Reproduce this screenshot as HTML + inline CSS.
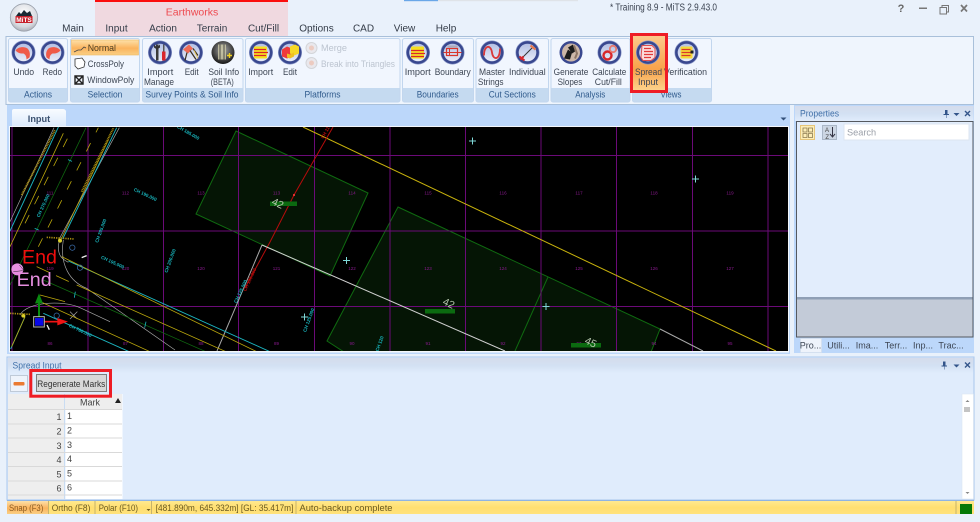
<!DOCTYPE html>
<html><head><meta charset="utf-8"><title>MiTS</title>
<style>
html,body{margin:0;padding:0;width:980px;height:522px;overflow:hidden;background:#e9f1fb}
svg{display:block;filter:blur(.3px)}
text{font-family:"Liberation Sans",sans-serif;font-size:9.4px;fill:#3d4654}
.c{text-anchor:middle}
.lab{fill:#2f5a8c;text-anchor:middle}
.tab{font-size:10px;fill:#333b47;text-anchor:middle}
.dis{fill:#bcc4d0}
.grid{font-size:4.5px;fill:#8a1a8f;text-anchor:middle}
.ch{font-size:15px;fill:#18b4bc;font-weight:bold}
.st{fill:#6a5a20;font-size:9.6px}
.gt{fill:#3f6fa8;font-size:9.4px}
.num{text-anchor:end;fill:#444;font-size:9px}
.val{fill:#444;font-size:9px}
</style></head><body>
<svg width="980" height="522" viewBox="0 0 980 522" xmlns="http://www.w3.org/2000/svg">
<defs>
<linearGradient id="gb" x1="0" y1="0" x2="0" y2="1"><stop offset="0" stop-color="#b4c0e4"/><stop offset="1" stop-color="#e8ecf8"/></linearGradient>
<linearGradient id="or" x1="0" y1="0" x2="0" y2="1"><stop offset="0" stop-color="#fde0a8"/><stop offset=".55" stop-color="#fbb45e"/><stop offset="1" stop-color="#f9cf85"/></linearGradient>
<linearGradient id="sp" x1="0" y1="0" x2="0" y2="1"><stop offset="0" stop-color="#fcc98a"/><stop offset=".6" stop-color="#f8a24a"/><stop offset="1" stop-color="#fdd48e"/></linearGradient>
<linearGradient id="yl" x1="0" y1="0" x2="0" y2="1"><stop offset="0" stop-color="#ffe98f"/><stop offset=".5" stop-color="#ffdf70"/><stop offset="1" stop-color="#ffe27c"/></linearGradient>
<linearGradient id="tb" x1="0" y1="0" x2="0" y2="1"><stop offset="0" stop-color="#d5dcec"/><stop offset=".5" stop-color="#d3e1f3"/><stop offset="1" stop-color="#e0ecfc"/></linearGradient>
<linearGradient id="dt" x1="0" y1="0" x2="0" y2="1"><stop offset="0" stop-color="#f8fbff"/><stop offset="1" stop-color="#dbe9fb"/></linearGradient>
<radialGradient id="lg" cx=".5" cy=".35" r=".7"><stop offset="0" stop-color="#fff"/><stop offset=".7" stop-color="#d5d8de"/><stop offset="1" stop-color="#a0a4ae"/></radialGradient>
<radialGradient id="dk" cx=".5" cy=".4" r=".6"><stop offset="0" stop-color="#aaa"/><stop offset="1" stop-color="#161616"/></radialGradient>
<g id="ring"><circle r="11.7" fill="#39488f"/><circle r="11.7" fill="none" stroke="#8a97c8" stroke-width=".6"/><circle r="8.8" fill="url(#gb)"/></g>
<clipPath id="cv"><rect x="10" y="127" width="778" height="224"/></clipPath>
</defs>

<rect width="980" height="522" fill="#e9f1fb"/>
<rect x="404" y="0" width="34" height="1.200" fill="#6aa7e8"/><rect x="438" y="0" width="140" height="1.200" fill="#dfe3e8"/>

<!-- logo -->
<circle cx="24" cy="17.500" r="13.700" fill="url(#lg)" stroke="#9aa0aa" stroke-width=".8"/>
<path d="M16 16l3-4 2 2 3-4 3 3 3-2 2 5z" fill="#1a2a33"/>
<rect x="15.500" y="16" width="17" height="7" fill="#c8202a"/>
<text x="24" y="22" class="c" style="font-size:6.500px;font-weight:bold;fill:#fff">MiTS</text>

<!-- context band and tabs -->
<rect x="95" y="0" width="193" height="36" fill="#f0d9e0"/>
<rect x="95" y="0" width="193" height="2" fill="#fb0d0d"/>
<text x="192" y="15.500" class="c" style="font-size:10.500px;fill:#ee4a50">Earthworks</text>
<text x="73" y="31.500" class="tab">Main</text>
<text x="116.500" y="31.500" class="tab">Input</text>
<text x="163" y="31.500" class="tab">Action</text>
<text x="212" y="31.500" class="tab">Terrain</text>
<text x="263.500" y="31.500" class="tab">Cut/Fill</text>
<text x="316.500" y="31.500" class="tab">Options</text>
<text x="363.500" y="31.500" class="tab">CAD</text>
<text x="404.500" y="31.500" class="tab">View</text>
<text x="446" y="31.500" class="tab">Help</text>
<text x="610" y="10.500" style="font-size:9.800px;fill:#3a4250" textLength="107" lengthAdjust="spacingAndGlyphs">* Training 8.9 - MiTS 2.9.43.0</text>

<!-- window buttons -->
<text x="901" y="12" class="c" style="font-size:11px;font-weight:bold;fill:#666">?</text>
<rect x="919" y="7.500" width="8" height="1.500" fill="#777"/>
<path d="M940 7.500h6.500v6.500h-6.500zM942 7.500v-2h6.500v6.500h-2" fill="none" stroke="#777" stroke-width="1"/>
<path d="M961 5l6 6.500M967 5l-6 6.500" stroke="#777" stroke-width="1.700"/>

<!-- ribbon -->
<rect x="6" y="36.500" width="967.500" height="68" fill="#eff5fd" stroke="#a9c0da" stroke-width="1"/>
<g fill="#f1f6fe" stroke="#c2d6ee" stroke-width="1">
<rect x="8.500" y="38.500" width="59" height="63.500" rx="2"/>
<rect x="70.500" y="38.500" width="69" height="63.500" rx="2"/>
<rect x="142.500" y="38.500" width="100.500" height="63.500" rx="2"/>
<rect x="245.500" y="38.500" width="154.500" height="63.500" rx="2"/>
<rect x="402.500" y="38.500" width="71" height="63.500" rx="2"/>
<rect x="476" y="38.500" width="72.500" height="63.500" rx="2"/>
<rect x="551" y="38.500" width="79" height="63.500" rx="2"/>
<rect x="632.500" y="38.500" width="79" height="63.500" rx="2"/>
</g>
<g fill="#c5daf0">
<rect x="9" y="88" width="58" height="13.500"/><rect x="71" y="88" width="68" height="13.500"/>
<rect x="143" y="88" width="99.500" height="13.500"/><rect x="246" y="88" width="153.500" height="13.500"/>
<rect x="403" y="88" width="70" height="13.500"/><rect x="476.500" y="88" width="71.500" height="13.500"/>
<rect x="551.500" y="88" width="78" height="13.500"/><rect x="633" y="88" width="78" height="13.500"/>
</g>
<text x="38" y="97.500" class="lab" textLength="28" lengthAdjust="spacingAndGlyphs">Actions</text>
<text x="105" y="97.500" class="lab" textLength="34.700" lengthAdjust="spacingAndGlyphs">Selection</text>
<text x="192" y="97.500" class="lab" textLength="93" lengthAdjust="spacingAndGlyphs">Survey Points &amp; Soil Info</text>
<text x="322.500" y="97.500" class="lab" textLength="36" lengthAdjust="spacingAndGlyphs">Platforms</text>
<text x="437.700" y="97.500" class="lab" textLength="42" lengthAdjust="spacingAndGlyphs">Boundaries</text>
<text x="512.300" y="97.500" class="lab" textLength="47" lengthAdjust="spacingAndGlyphs">Cut Sections</text>
<text x="590.300" y="97.500" class="lab" textLength="30" lengthAdjust="spacingAndGlyphs">Analysis</text>
<text x="671" y="97.500" class="lab" textLength="21" lengthAdjust="spacingAndGlyphs">Views</text>

<!-- selection -->
<rect x="71.500" y="40" width="67" height="15" fill="url(#or)" stroke="#eeb760" stroke-width=".6"/>
<path d="M74 52l4-2 3 0 3-3 2 1" fill="none" stroke="#444" stroke-width=".8"/>
<text x="87.700" y="51" style="fill:#4a3c20" textLength="28.300" lengthAdjust="spacingAndGlyphs">Normal</text>
<path d="M75 59l7-1 3 4-1 5-6 2-3-3z" fill="#fff" stroke="#333" stroke-width=".8"/>
<text x="87.700" y="67" textLength="36.300" lengthAdjust="spacingAndGlyphs">CrossPoly</text>
<path d="M75 76h8v8h-8zM75 76l8 8M83 76l-8 8" fill="none" stroke="#222" stroke-width="1.400"/>
<text x="87.300" y="83" textLength="47" lengthAdjust="spacingAndGlyphs">WindowPoly</text>

<!-- icons -->
<g transform="translate(23.500,52.500)"><use href="#ring"/><path d="M-8 -2c3-4 9-4 12-2 2 2 3 5 2 9l-3 2c0-3-1-5-3-6-3 0-5 0-8-3z" fill="#ef5a48"/></g>
<g transform="translate(52.500,52.500)"><use href="#ring"/><path d="M8 -2c-3-4-9-4-12-2-2 2-3 5-2 9l3 2c0-3 1-5 3-6 3 0 5 0 8-3z" fill="#ef5a48"/></g>
<g transform="translate(160,52.500)"><use href="#ring"/><path d="M-4 -8h2.500v16h-2.500z" fill="#3a3a3a"/><path d="M-6 -8l3 3 3-3v3l-3 2-3-2z" fill="#333"/><path d="M2 -1h3.500v9h-3.500z" fill="#d9262c"/><path d="M3 -8h1.500v7h-1.500z" fill="#555"/></g>
<g transform="translate(191,52.500)"><use href="#ring"/><path d="M-8 -3l6-5 4 4-5 5z" fill="#ef6a55"/><path d="M-4 0l-2 8M-1 -2l6 9M2 -4l5 7" stroke="#3a3020" stroke-width="1.200" fill="none"/><path d="M3 -2l4 8" stroke="#e6c860" stroke-width="1"/></g>
<g transform="translate(223,52.500)"><circle r="11.500" fill="url(#dk)"/><rect x="-5" y="-8" width="8" height="15" fill="#c9c6a5" opacity=".85"/><path d="M-3 -8v15M1 -8v15" stroke="#333" stroke-width=".8"/><path d="M4 3h5M6.500 .5v5" stroke="#f0d020" stroke-width="1.400"/></g>
<g transform="translate(261,52.500)"><use href="#ring"/><rect x="-7" y="-6" width="13" height="12" rx="1" fill="#f5e020"/><path d="M-7 -3h12M-7 0h14M-7 3h12" stroke="#d9262c" stroke-width="1.300"/></g>
<g transform="translate(290,52.500)"><use href="#ring"/><path d="M-8 -3l5-3 5 2v8l-5 2-5-2z" fill="#ef3a3a"/><path d="M0 -6l5-2 4 2v7l-5 2-4-2z" fill="#f6d826"/><path d="M-3 1l3 1 4-2v4l-4 2-3-1z" fill="#f0c020"/></g>
<g opacity=".55"><circle cx="311.500" cy="48" r="5.500" fill="#e4dde0" stroke="#bbb"/><circle cx="311.500" cy="48" r="2.500" fill="#e9a890"/><circle cx="311.500" cy="63" r="5.500" fill="#e4dde0" stroke="#bbb"/><circle cx="311.500" cy="63" r="2.500" fill="#e9a890"/></g>
<text x="321" y="51" class="dis" textLength="26" lengthAdjust="spacingAndGlyphs">Merge</text>
<text x="321" y="67" class="dis" textLength="74" lengthAdjust="spacingAndGlyphs">Break into Triangles</text>
<g transform="translate(418,52.500)"><use href="#ring"/><rect x="-7" y="-6" width="13" height="12" rx="1" fill="#f5e020"/><path d="M-7 -2h13M-7 1h14M-7 4h13" stroke="#d9262c" stroke-width="1.200"/></g>
<g transform="translate(452.500,52.500)"><use href="#ring"/><rect x="-6" y="-4" width="11" height="7" fill="none" stroke="#d9362c" stroke-width="1.200"/><path d="M-9 0h18M-3 -4v7" stroke="#d9362c" stroke-width="1"/><rect x="-5" y="-7" width="10" height="2" fill="#aab"/></g>
<g transform="translate(492,52.500)"><use href="#ring"/><path d="M-8 3c0-11 7-11 8-3s8 8 8-4" fill="none" stroke="#d8383a" stroke-width="1.800"/></g>
<g transform="translate(527.500,52.500)"><use href="#ring"/><path d="M-6 6L6 -6" stroke="#333" stroke-width="1"/><path d="M-8 4l5 4M-7 7l3-3" stroke="#d9262c" stroke-width="2"/><path d="M3 -7l5 4" stroke="#e87a50" stroke-width="2.200"/></g>
<g transform="translate(571,52.500)"><circle r="11.500" fill="#39488f"/><circle r="9" fill="#ccb7a8"/><path d="M-7 6l4-9 4 3-2 7zM-3 -5l5-3 2 7-3 2z" fill="#1c1c1c"/><path d="M3 -7l3 8-2 5" stroke="#8c7565" stroke-width="2" fill="none"/></g>
<g transform="translate(609.500,52.500)"><use href="#ring"/><circle cx="-2" cy="3" r="4" fill="none" stroke="#d8262a" stroke-width="2.400"/><circle cx="3.500" cy="-3.500" r="3.200" fill="none" stroke="#e87a70" stroke-width="1.800"/></g>

<rect x="632" y="36" width="34" height="55" fill="url(#sp)"/>
<g transform="translate(648,52.500)"><use href="#ring"/><path d="M-6 -7h10l3 3v9l-4 3H-5l-2-3z" fill="#fbdcdc" stroke="#e05050" stroke-width="1"/><path d="M-4 -4h7M-4 -1h9M-4 2h9M-4 5h7" stroke="#e03a3a" stroke-width="1.200"/></g>
<g transform="translate(686.500,52.500)"><use href="#ring"/><rect x="-6" y="-6" width="12" height="12" rx="1" fill="#f5d838"/><path d="M-5 -3h9M-5 0h9M-5 3h9" stroke="#d9362c" stroke-width="1.200"/><rect x="4" y="-2" width="3" height="3" fill="#222"/></g>

<!-- ribbon labels -->
<text x="23.700" y="75" class="c" textLength="20.700" lengthAdjust="spacingAndGlyphs">Undo</text>
<text x="52.300" y="75" class="c" textLength="19.300" lengthAdjust="spacingAndGlyphs">Redo</text>
<text x="160.300" y="75" class="c" textLength="26" lengthAdjust="spacingAndGlyphs">Import</text><text x="159" y="85" class="c" textLength="30" lengthAdjust="spacingAndGlyphs">Manage</text>
<text x="191.700" y="75" class="c" textLength="14" lengthAdjust="spacingAndGlyphs">Edit</text>
<text x="223.700" y="75" class="c" textLength="30.700" lengthAdjust="spacingAndGlyphs">Soil Info</text><text x="222.300" y="85" class="c" textLength="23" lengthAdjust="spacingAndGlyphs">(BETA)</text>
<text x="260.700" y="75" class="c" textLength="25" lengthAdjust="spacingAndGlyphs">Import</text>
<text x="290" y="75" class="c" textLength="14" lengthAdjust="spacingAndGlyphs">Edit</text>
<text x="417.700" y="75" class="c" textLength="26" lengthAdjust="spacingAndGlyphs">Import</text>
<text x="452.700" y="75" class="c" textLength="36" lengthAdjust="spacingAndGlyphs">Boundary</text>
<text x="492" y="75" class="c" textLength="26" lengthAdjust="spacingAndGlyphs">Master</text><text x="490.700" y="85" class="c" textLength="25.700" lengthAdjust="spacingAndGlyphs">Strings</text>
<text x="527.300" y="75" class="c" textLength="36.700" lengthAdjust="spacingAndGlyphs">Individual</text>
<text x="571" y="75" class="c" textLength="34.700" lengthAdjust="spacingAndGlyphs">Generate</text><text x="570" y="85" class="c" textLength="24.700" lengthAdjust="spacingAndGlyphs">Slopes</text>
<text x="609.300" y="75" class="c" textLength="34" lengthAdjust="spacingAndGlyphs">Calculate</text><text x="608.300" y="85" class="c" textLength="27" lengthAdjust="spacingAndGlyphs">Cut/Fill</text>
<text x="648.500" y="75" class="c" textLength="27" lengthAdjust="spacingAndGlyphs">Spread</text><text x="648" y="85" class="c" textLength="20" lengthAdjust="spacingAndGlyphs">Input</text>
<text x="685.500" y="75" class="c" textLength="43" lengthAdjust="spacingAndGlyphs">Verification</text>
<rect x="631.500" y="34.500" width="35" height="57" fill="none" stroke="#ee1c25" stroke-width="3"/>

<!-- document area -->
<rect x="7" y="105" width="783" height="249" fill="#bcd7fa"/>
<path d="M12 127v-16q0-2 2-2h49q2 0 3 2v16z" fill="url(#dt)"/>
<text x="39" y="122" class="c" style="font-weight:bold;font-size:9.200px;fill:#3b5270">Input</text>
<path d="M780.500 117.500h6l-3 3z" fill="#33507a"/>
<rect x="9" y="126" width="780" height="226.500" fill="#f4f7fb"/>
<rect x="10" y="127" width="778" height="224" fill="#000"/>

<!-- CAD canvas -->
<g clip-path="url(#cv)">
<g fill="#051505" stroke="#0f6a10" stroke-width="1">
<path d="M236 131L368 193 330 276 196 214z"/>
<path d="M398 207L660 329 651 352H344L327 341z"/>
</g>
<path d="M548 277L515 351" stroke="#0f6a10" fill="none"/>
<g stroke="#6b0a78" stroke-width="1">
<path d="M12 127v224M88 127v224M163.500 127v224M238.500 127v224M314.500 127v224M390 127v224M465.500 127v224M541 127v224M616.500 127v224M692.500 127v224M768 127v224"/>
<path d="M10 155.500h778M10 231h778M10 306.500h778"/>
</g>
<path d="M303 127L776 351" stroke="#c9b30c" stroke-width="1" fill="none"/>
<path d="M333 127L294 195 270 242 245 288" stroke="#b50c0c" stroke-width="1" fill="none"/>
<circle cx="294" cy="195" r="1.100" fill="#e33"/>
<path d="M660 329L703 351M262 245L217 351" stroke="#a8a8a8" stroke-width="1" fill="none"/>
<path d="M262 245L505 351" stroke="#cfcfcf" stroke-width="1" fill="none"/>

<g>
<text x="50" y="194.500" class="grid">111</text><text x="125.500" y="194.500" class="grid">112</text><text x="201" y="194.500" class="grid">113</text><text x="276.500" y="194.500" class="grid">113</text><text x="352" y="194.500" class="grid">114</text><text x="428" y="194.500" class="grid">115</text><text x="503" y="194.500" class="grid">116</text><text x="579" y="194.500" class="grid">117</text><text x="654" y="194.500" class="grid">118</text><text x="730" y="194.500" class="grid">119</text>
<text x="50" y="270" class="grid">119</text><text x="125.500" y="270" class="grid">120</text><text x="201" y="270" class="grid">120</text><text x="276.500" y="270" class="grid">121</text><text x="352" y="270" class="grid">122</text><text x="428" y="270" class="grid">123</text><text x="503" y="270" class="grid">124</text><text x="579" y="270" class="grid">125</text><text x="654" y="270" class="grid">126</text><text x="730" y="270" class="grid">127</text>
<text x="50" y="345" class="grid">86</text><text x="125.500" y="345" class="grid">87</text><text x="201" y="345" class="grid">88</text><text x="276.500" y="345" class="grid">89</text><text x="352" y="345" class="grid">90</text><text x="428" y="345" class="grid">91</text><text x="503" y="345" class="grid">92</text><text x="579" y="345" class="grid">93</text><text x="654" y="345" class="grid">94</text><text x="730" y="345" class="grid">95</text>
</g>

<!-- house labels -->
<rect x="270" y="201.500" width="27" height="4.500" fill="#0b6a10"/>
<text transform="translate(271,204) rotate(25)" style="font-size:10.500px;fill:#b8c8b0">42</text>
<rect x="425" y="309" width="30" height="4.500" fill="#0b6a10"/>
<text transform="translate(442,304) rotate(25)" style="font-size:10.500px;fill:#b8c8b0">42</text>
<rect x="571" y="343" width="30" height="4.500" fill="#0b6a10"/>
<text transform="translate(584,343) rotate(25)" style="font-size:10.500px;fill:#b8c8b0">45</text>

<g stroke="#7fd8d8" stroke-width="1" fill="none">
<path d="M469 141h7M472.500 137.500v7M692 179h7M695.500 175.500v7M343 260.500h7M346.500 257v7M301 317h7M304.500 313.500v7M542.500 306.500h7M546 303v7"/>
</g>

<!-- road work in 3x coordinates -->
<g transform="translate(0,125) scale(.33333)" fill="none">
<g stroke="#a8a8a8" stroke-width="2">
<path d="M30 290L162 8M176 345L358 8"/>
<path d="M178 345C170 385 180 400 205 412M190 345C178 420 210 470 260 490L525 675"/>
<path d="M60 570C80 530 190 525 240 548L330 590"/>
<path d="M210 560l22 22M232 560l-22 22"/>
</g>
<g stroke="#1cb5c0" stroke-width="2.800">
<path d="M30 318L178 0M188 342L350 8"/>
<path d="M205 408L810 680"/>
<path d="M75 575L32 672M130 565L410 690"/>
</g>
<g stroke="#b9a50c" stroke-width="2.400">
<path d="M30 365L190 25M182 345L325 45"/>
<path d="M185 395L770 680M230 480L700 690M110 525L450 680"/>
<path d="M35 665L75 575"/>
</g>
<path d="M65 210L165 15M245 200L340 10" stroke="#a58a10" stroke-width="6" stroke-dasharray="3 2"/>
<path d="M75 295L215 15" stroke="#b9a50c" stroke-width="2.400" stroke-dasharray="28 36"/>
<path d="M115 365L295 8" stroke="#b9a50c" stroke-width="2.400" stroke-dasharray="28 36"/>
<path d="M110 425L225 478" stroke="#b9a50c" stroke-width="2.400" stroke-dasharray="42 22"/>
<path d="M120 510L195 530" stroke="#b9a50c" stroke-width="2.400"/>
<path d="M258 8L30 480M130 465L640 690" stroke="#0f6a10" stroke-width="2.200"/>
<path d="M204 104l12 5M104 310l12 5M226 500l-3 18M438 590l-4 18" stroke="#1cb5c0" stroke-width="2.500"/>
<g stroke="#3a6ba8" stroke-width="2.200"><circle cx="217" cy="368" r="8"/><circle cx="240" cy="428" r="8"/><circle cx="170" cy="572" r="8"/></g>
<path d="M245 398l15-6M141 600l7 14" stroke="#f0f0f0" stroke-width="4"/>
<circle cx="180" cy="347" r="6" fill="#dcd02a"/><circle cx="70" cy="572" r="6" fill="#dcd02a"/>
<path d="M140 337l82 5M30 565l60 3" stroke="#a58a10" stroke-width="5" stroke-dasharray="4 3"/>
<text transform="translate(400,197) rotate(25)" class="ch" style="font-size:14px">CH 190.000</text>
<text transform="translate(118,278) rotate(-65)" class="ch" style="font-size:14px">CH 370.000</text>
<text transform="translate(294,354) rotate(-70)" class="ch" style="font-size:14px">CH 205.000</text>
<text transform="translate(302,400) rotate(25)" class="ch" style="font-size:14px">CH 195.000</text>
<text transform="translate(502,444) rotate(-70)" class="ch" style="font-size:14px">CH 200.000</text>
<text transform="translate(205,605) rotate(25)" class="ch" style="font-size:14px">CH 780.000</text>
<text transform="translate(710,535) rotate(-65)" class="ch" style="font-size:14px">CH 125.000</text>
<text transform="translate(738,500) rotate(-65)" style="font-size:14px;fill:#b50c0c;font-weight:bold">CH 100.000</text>
<text transform="translate(530,8) rotate(30)" class="ch" style="font-size:14px">CH 185.000</text>
<circle cx="52" cy="433" r="18" fill="#e78ee0"/>
<path d="M58 420l15 18M40 440l28-3" stroke="#222" stroke-width="1.500"/>
<text x="66" y="415" style="font-size:59px;fill:#f00d0d">End</text>
<text x="50" y="483" style="font-size:59px;fill:#e78ee0">End</text>
<path d="M117 575V530" stroke="#0a8a10" stroke-width="6"/><path d="M105 535L117 505 129 535z" fill="#0a8a10"/>
<path d="M133 590h42" stroke="#ee1414" stroke-width="5"/><path d="M172 579L204 590 172 601z" fill="#ee1414"/>
<rect x="101" y="575" width="32" height="31" fill="none" stroke="#b5b5b5" stroke-width="3"/>
<rect x="105" y="579" width="25" height="23" fill="#0808e8"/>
</g>
<g transform="translate(270,125) scale(.33333)">
<text transform="translate(108,622) rotate(-70)" class="ch" style="font-size:14px">CH 125.000</text>
<text transform="translate(325,680) rotate(-70)" class="ch" style="font-size:14px">CH 120</text>
<text transform="translate(160,42) rotate(-60)" style="font-size:14px;fill:#b50c0c;font-weight:bold">CH 110.000</text>
</g>
</g>

<!-- properties panel -->
<rect x="794" y="105" width="180" height="248" fill="#bcd7fa"/>
<rect x="795" y="106" width="178.500" height="15" fill="url(#tb)"/>
<text x="800" y="116.500" class="gt" textLength="39" lengthAdjust="spacingAndGlyphs">Properties</text>
<path d="M945 110h2.500v4h1.500v1h-2.500v3h-.5v-3h-2.500v-1h1.500z" fill="#33558a"/>
<path d="M953.500 113h6l-3 3z" fill="#33558a"/>
<path d="M965 111l5 5M970 111l-5 5" stroke="#33558a" stroke-width="1.400"/>
<rect x="796.500" y="121.500" width="176.500" height="215.500" fill="#e2edfc" stroke="#55595f" stroke-width="1"/>
<rect x="797" y="297" width="175.500" height="2.500" fill="#8f9fb5"/>
<rect x="797" y="299.500" width="175.500" height="37" fill="#c3cbd8"/>
<rect x="800.500" y="125.500" width="14" height="14" fill="#fdeeb8" stroke="#e6c67a"/>
<path d="M803 128h4v4h-4zM808.500 128h4v4h-4zM803 133.500h4v4h-4zM808.500 133.500h4v4h-4z" fill="none" stroke="#8a7a50" stroke-width=".8"/>
<rect x="822.500" y="125.500" width="14" height="14" fill="#ccd6e3" stroke="#aab7c7"/>
<text x="829" y="132" style="font-size:6px;fill:#444;text-anchor:end">A</text>
<text x="829" y="139" style="font-size:6px;fill:#444;text-anchor:end">Z</text>
<path d="M832.500 127v9M830 134l2.500 3 2.500-3" stroke="#334" stroke-width="1" fill="none"/>
<rect x="844" y="124" width="125" height="16" fill="#fff" stroke="#dce5f0"/>
<text x="847" y="135.500" style="fill:#9a9fa8;font-size:9.200px">Search</text>
<rect x="800.500" y="338.500" width="21" height="14" fill="#eef3fb" stroke="#d5dfeb" stroke-width=".7"/>
<text x="810.500" y="348.500" class="c" style="font-size:9px">Pro...</text>
<text x="838.500" y="348.500" class="c" style="font-size:9px">Utili...</text>
<text x="867" y="348.500" class="c" style="font-size:9px">Ima...</text>
<text x="896" y="348.500" class="c" style="font-size:9px">Terr...</text>
<text x="923" y="348.500" class="c" style="font-size:9px">Inp...</text>
<text x="951" y="348.500" class="c" style="font-size:9px">Trac...</text>

<!-- spread input panel -->
<rect x="7" y="357" width="967" height="143" fill="#e0ecfc" stroke="#a9c6ec" stroke-width="1"/>
<rect x="8" y="358" width="965.500" height="15" fill="url(#tb)"/>
<text x="12.500" y="368.500" class="gt" textLength="49" lengthAdjust="spacingAndGlyphs">Spread Input</text>
<path d="M943 361.500h2.500v4h1.500v1h-2.500v3h-.5v-3h-2.500v-1h1.500z" fill="#33558a"/>
<path d="M953.500 364.500h6l-3 3z" fill="#33558a"/>
<path d="M965 362.500l5 5M970 362.500l-5 5" stroke="#33558a" stroke-width="1.400"/>

<rect x="10.500" y="375.500" width="17" height="16" fill="#eef3fb" stroke="#bfcad8"/>
<rect x="13.500" y="382" width="11" height="3.500" rx="1" fill="#ea7a32"/>

<rect x="8" y="394" width="56.500" height="105" fill="#eeeeee"/>
<rect x="65.500" y="394" width="57" height="105" fill="#fff"/>
<rect x="64.500" y="394" width="57.500" height="15.500" fill="#eeeeee"/>
<path d="M64.500 394v105" stroke="#c9dcf2"/>
<path d="M8 409.500h114M8 424h114M8 438h114M8 452.500h114M8 466.500h114M8 481h114M8 495h114" stroke="#d9d9d9"/>
<text x="90" y="405.500" class="c" style="font-size:9px;fill:#444">Mark</text>
<path d="M115 403l3-5 3 5z" fill="#222"/>
<text x="61.500" y="420" class="num">1</text><text x="67" y="419" class="val">1</text>
<text x="61.500" y="434.500" class="num">2</text><text x="67" y="433.500" class="val">2</text>
<text x="61.500" y="449" class="num">3</text><text x="67" y="448" class="val">3</text>
<text x="61.500" y="463" class="num">4</text><text x="67" y="462" class="val">4</text>
<text x="61.500" y="477.500" class="num">5</text><text x="67" y="476.500" class="val">5</text>
<text x="61.500" y="491.500" class="num">6</text><text x="67" y="490.500" class="val">6</text>

<rect x="36.500" y="374.500" width="70" height="17" fill="#d8d8d8" stroke="#7e7e7e"/>
<text x="71.300" y="387" class="c" style="font-size:9.500px;fill:#333" textLength="68" lengthAdjust="spacingAndGlyphs">Regenerate Marks</text>
<rect x="30.800" y="370.500" width="79.700" height="25.700" fill="none" stroke="#ee1c25" stroke-width="3"/>

<rect x="962" y="394" width="11.500" height="105" fill="#fff" stroke="#dde6f2" stroke-width=".6"/>
<path d="M965.500 402l2-2 2 2z" fill="#888"/>
<rect x="964" y="407" width="6" height="5" fill="#c4c4c4"/>
<path d="M965.500 492l2 2 2-2z" fill="#888"/>

<!-- status bar -->
<rect x="7" y="500" width="967" height="1.200" fill="#8fb4e3"/>
<rect x="7" y="501" width="967" height="13" fill="url(#yl)"/>
<rect x="7" y="501" width="41" height="13" fill="url(#or)"/>
<path d="M48.500 501v13M95 501v13M151.500 501v13M296 501v13M956 501v13" stroke="#c7b36a" stroke-width="1"/>
<text x="9" y="511.200" style="fill:#8a5a20;font-size:9.600px" textLength="34.300" lengthAdjust="spacingAndGlyphs">Snap (F3)</text>
<text x="51.700" y="511.200" class="st" textLength="38.700" lengthAdjust="spacingAndGlyphs">Ortho (F8)</text>
<text x="98.700" y="511.200" class="st" textLength="39.300" lengthAdjust="spacingAndGlyphs">Polar (F10)</text>
<path d="M146.500 509h4l-2 2z" fill="#6a5a20"/>
<text x="155.700" y="511.200" class="st" textLength="137.700" lengthAdjust="spacingAndGlyphs">[481.890m, 645.332m] [GL: 35.417m]</text>
<text x="299.500" y="511.200" class="st" textLength="93" lengthAdjust="spacingAndGlyphs">Auto-backup complete</text>
<rect x="960" y="504" width="12" height="10" fill="#067a06"/>
</svg>
</body></html>
